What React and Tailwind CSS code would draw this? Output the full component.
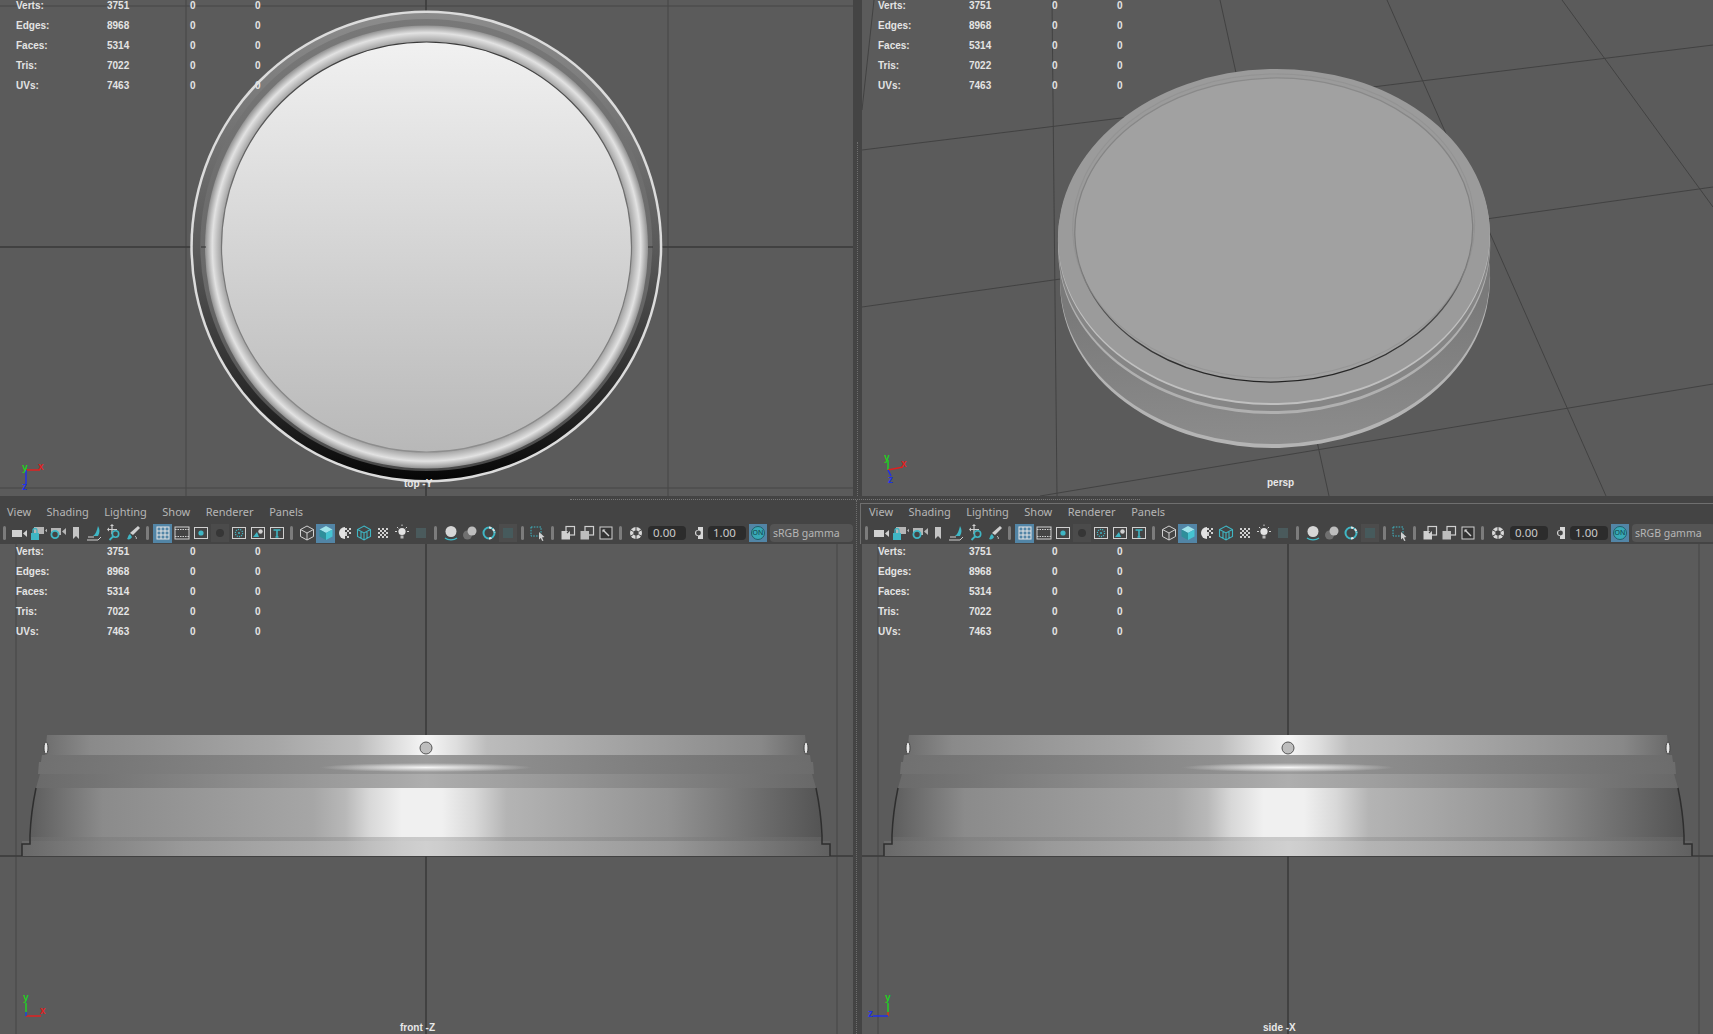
import React from "react";

const teal = "#3fb6c4";
const light = "#d0d0d0";

const menuItems = ["View", "Shading", "Lighting", "Show", "Renderer", "Panels"];
const stats = [
  ["Verts:", "3751"],
  ["Edges:", "8968"],
  ["Faces:", "5314"],
  ["Tris:", "7022"],
  ["UVs:", "7463"],
];

// Small toolbar glyphs, all drawn in an 18x18 box
const Glyph = ({ children }) => (
  <svg width="18" height="18" viewBox="0 0 18 18" className="block">
    {children}
  </svg>
);

const Checker = ({ x0, y0, n }) => {
  const cells = [];
  for (let i = 0; i < n; i++) {
    for (let j = 0; j < n; j++) {
      if ((i + j) % 2 === 0) {
        cells.push(<rect key={`${i}-${j}`} x={x0 + i * 2} y={y0 + j * 2} width="2" height="2" fill={light} />);
      }
    }
  }
  return <>{cells}</>;
};

const Camera = ({ x = 2, y = 6, c = light }) => (
  <>
    <rect x={x} y={y} width="10" height="7" fill={c} />
    <polygon points={`${x + 11},${y + 3.5} ${x + 15},${y} ${x + 15},${y + 7}`} fill={c} />
  </>
);

const icons = {
  camera: <Camera />,
  camLock: (
    <>
      <Camera x={5} y={3} c="#b5b5b5" />
      <rect x="2" y="9" width="8" height="7" fill={teal} />
      <path d="M4 9V6.5a2 2 0 0 1 4 0V9" fill="none" stroke={teal} strokeWidth="1.3" />
    </>
  ),
  camLink: (
    <>
      <Camera x={3} y={4} c="#b5b5b5" />
      <circle cx="7" cy="10.5" r="3.6" fill="#444" stroke={teal} strokeWidth="1.8" />
    </>
  ),
  bookmark: <path d="M6 3h6v12l-3-3-3 3z" fill="#c4c4c4" />,
  plane: (
    <>
      <path d="M7 12c3-2 4-6 5-10 2 3 2 7 0 10z" fill={teal} />
      <path d="M2 13h6M1 16h11l3-3" fill="none" stroke={light} strokeWidth="1" />
    </>
  ),
  gizmo: (
    <>
      <path d="M7 1v9M3 5.5h9" stroke={light} strokeWidth="1.2" />
      <path d="M7 0l-2 2h4zM2 5.5l2-2v4z" fill={light} />
      <circle cx="10.5" cy="10" r="3.2" fill="none" stroke={teal} strokeWidth="1.6" />
      <path d="M8 12.5l-3.5 3.5" stroke={teal} strokeWidth="1.8" />
    </>
  ),
  brush: (
    <>
      <path d="M14 2l2 2-7 7-3-2z" fill={light} />
      <path d="M6 10l2 3c-1 2-3 3-5 2 1-1 1-4 3-5z" fill={teal} />
      <path d="M11 12c1 1 2 2 1 3" fill="none" stroke={light} />
    </>
  ),
  grid: (
    <>
      <rect x="3" y="3" width="12" height="12" fill="none" stroke="#e6e6e6" />
      <path d="M7 3v12M11 3v12M3 7h12M3 11h12" stroke="#e6e6e6" />
    </>
  ),
  film: (
    <>
      <rect x="2" y="3" width="14" height="12" fill="none" stroke={light} />
      <path d="M2 5.5h14M2 12.5h14" stroke={light} strokeDasharray="1.5 1" />
    </>
  ),
  dot: (
    <>
      <rect x="2.5" y="3.5" width="13" height="11" fill="none" stroke={light} />
      <circle cx="9" cy="9" r="2.6" fill={teal} />
    </>
  ),
  darkDot: (
    <>
      <rect x="0" y="0" width="18" height="18" fill="#4b4b4b" />
      <circle cx="9" cy="9" r="4" fill="#363636" />
    </>
  ),
  target: (
    <>
      <rect x="2.5" y="3.5" width="13" height="11" fill="none" stroke={light} />
      <circle cx="9" cy="9" r="3.6" fill="none" stroke={teal} strokeWidth="1.2" strokeDasharray="1.2 1" />
      <circle cx="9" cy="9" r="1" fill={teal} />
    </>
  ),
  shapes: (
    <>
      <rect x="2.5" y="3.5" width="13" height="11" fill="none" stroke={light} />
      <polygon points="4,13 8,8 10,13" fill={teal} />
      <circle cx="11.5" cy="7.5" r="2.2" fill={light} />
    </>
  ),
  textBox: (
    <>
      <rect x="2.5" y="3.5" width="13" height="11" fill="none" stroke={light} />
      <path d="M5.5 6h7M9 6v7M7.5 13h3" stroke={teal} strokeWidth="1.6" fill="none" />
    </>
  ),
  wireCube: <path d="M9 2l6.5 3.5v7L9 16l-6.5-3.5v-7zM2.5 5.5L9 9l6.5-3.5M9 9v7" fill="none" stroke={light} />,
  solidCube: (
    <>
      <path d="M9 2l6.5 3.5L9 9 2.5 5.5z" fill="#9fe3ea" />
      <path d="M2.5 5.5L9 9v7l-6.5-3.5z" fill="#2f8f9b" />
      <path d="M15.5 5.5L9 9v7l6.5-3.5z" fill="#45c3d0" />
    </>
  ),
  halfCheck: (
    <>
      <path d="M9 3a6 6 0 0 0 0 12z" fill="#e2e2e2" />
      <Checker x0={9} y0={4} n={3} />
      <rect x="9" y="10" width="2" height="2" fill={light} />
      <rect x="11" y="12" width="2" height="2" fill={light} />
    </>
  ),
  tealCube: (
    <path d="M9 2l6.5 3.5v7L9 16l-6.5-3.5v-7zM2.5 5.5L9 9l6.5-3.5M9 9v7M6 7v7M12 7v7" fill="none" stroke={teal} strokeWidth="1.1" />
  ),
  checker: <Checker x0={4} y0={4} n={5} />,
  bulb: (
    <>
      <circle cx="9" cy="7.5" r="3.6" fill="#e4e4e4" />
      <rect x="7.5" y="11.5" width="3" height="3" fill="#b8b8b8" />
      <path d="M9 0.5v1.5M2 7.5h2M14 7.5h2M4 3l1.3 1.3M14 3l-1.3 1.3" stroke={light} />
    </>
  ),
  dim: <rect x="4" y="4" width="10" height="10" fill="#4a5a5c" />,
  dimWide: (
    <>
      <rect x="0" y="0" width="18" height="18" fill="#4c4c4c" />
      <rect x="4" y="4" width="10" height="10" fill="#465a5c" />
    </>
  ),
  sphere: (
    <>
      <circle cx="9" cy="7.5" r="5.5" fill="#d6d6d6" />
      <path d="M3 14c3 2.5 9 2.5 12 0" fill="none" stroke={teal} strokeWidth="1.3" />
    </>
  ),
  spheres: (
    <>
      <circle cx="6.5" cy="11" r="4.5" fill="#707070" />
      <circle cx="11" cy="7" r="4.5" fill="#bdbdbd" />
    </>
  ),
  ring: (
    <>
      <circle cx="9" cy="9" r="5.5" fill="none" stroke={teal} strokeWidth="2" />
      <path d="M9 3.5a5.5 5.5 0 0 1 5.5 5.5M9 14.5a5.5 5.5 0 0 0 2.8-.8" fill="none" stroke="#e4e4e4" strokeWidth="2" strokeDasharray="2.5 1.5" />
    </>
  ),
  select: (
    <>
      <rect x="2" y="3" width="10" height="9" fill="none" stroke={teal} strokeDasharray="1.6 1.2" />
      <path d="M10 8l5.5 5-2.5.4 1.5 3-1.3.6-1.5-3-1.7 1.6z" fill={light} />
    </>
  ),
  overlapA: (
    <>
      <rect x="7" y="2.5" width="8.5" height="8.5" fill="none" stroke={light} strokeWidth="1.2" />
      <rect x="2.5" y="7" width="8.5" height="8.5" fill={light} />
      <path d="M8 9l3-3" stroke="#444" strokeWidth="1.2" />
    </>
  ),
  overlapB: (
    <>
      <rect x="7" y="2.5" width="8.5" height="8.5" fill="none" stroke={light} strokeWidth="1.2" />
      <rect x="2.5" y="7" width="8.5" height="8.5" fill="#bdbdbd" />
    </>
  ),
  expand: (
    <>
      <rect x="3" y="3" width="12" height="12" fill="#333" stroke={light} />
      <path d="M6 6l6 6" stroke={light} strokeWidth="1.4" />
      <path d="M5.5 5.5h3l-3 3z" fill={light} />
    </>
  ),
  aperture: (
    <>
      <circle cx="9" cy="9" r="6" fill="#d8d8d8" />
      <path d="M9 6l2.6 1.5v3L9 12l-2.6-1.5v-3z" fill="#444" />
      <path d="M9 3v3M14.2 6l-2.6 1.5M14.2 12l-2.6-1.5M9 15v-3M3.8 12l2.6-1.5M3.8 6l2.6 1.5" stroke="#444" />
    </>
  ),
  gamma: (
    <>
      <path d="M9 3h5v12H9z" fill="#d8d8d8" />
      <path d="M9 6a3 3 0 0 0 0 6z" fill="#d8d8d8" />
      <circle cx="9.5" cy="9" r="2.4" fill="#444" />
    </>
  ),
};

const Icon = ({ name, active }) => (
  <div className={`w-[19px] h-[19px] flex items-center justify-center shrink-0 ${active ? "bg-[#5285a6]" : ""}`}>
    <Glyph>{icons[name]}</Glyph>
  </div>
);

const Sep = ({ first }) => (
  <div className={`h-[14px] flex items-center justify-center shrink-0 ${first ? "w-[9px]" : "w-[11px]"}`}>
    <div className="w-[3px] h-[14px] bg-[#7c7c7c] rounded-sm" />
  </div>
);

const Group = ({ names, activeName }) => (
  <>
    {names.map((n) => (
      <Icon key={n} name={n} active={n === activeName} />
    ))}
  </>
);

const Field = ({ value }) => (
  <div className="w-[38px] h-[14px] bg-[#2c2c2c] rounded-sm pl-[5px] text-[11.5px] leading-[14px] text-[#c9c9c9] shrink-0">
    {value}
  </div>
);

const PaneHeader = () => (
  <div className="font-['Noto_Sans',sans-serif]">
    <div className="flex gap-[15.5px] pl-[7px] h-[18px] pt-[1px] items-center text-[11px] text-[#b6b6b6]">
      {menuItems.map((m) => (
        <span key={m}>{m}</span>
      ))}
    </div>
    <div className="flex items-center h-[22px] mt-[1px] whitespace-nowrap">
      <Sep first />
      <Group names={["camera", "camLock", "camLink", "bookmark", "plane", "gizmo", "brush"]} />
      <Sep />
      <Group names={["grid", "film", "dot", "darkDot", "target", "shapes", "textBox"]} activeName="grid" />
      <Sep />
      <Group names={["wireCube", "solidCube", "halfCheck", "tealCube", "checker", "bulb", "dim"]} activeName="solidCube" />
      <Sep />
      <Group names={["sphere", "spheres", "ring", "dimWide"]} />
      <Sep />
      <Icon name="select" />
      <Sep />
      <Group names={["overlapA", "overlapB", "expand"]} />
      <Sep />
      <Icon name="aperture" />
      <div className="ml-[3px]">
        <Field value="0.00" />
      </div>
      <div className="ml-[2px]">
        <Icon name="gamma" />
      </div>
      <div className="ml-[1px]">
        <Field value="1.00" />
      </div>
      <div className="ml-[3px] w-[18px] h-[18px] bg-[#5285a6] flex items-center justify-center shrink-0">
        <div className="w-[14px] h-[14px] rounded-full bg-[#38a9b6] border border-[#1f5f68] text-[7px] leading-[12px] text-center text-[#12393f]">
          ON
        </div>
      </div>
      <div className="ml-[3px] w-[83px] h-[18px] bg-[#545454] rounded-sm pl-[3px] text-[10.5px] leading-[18px] text-[#b6b6b6] shrink-0">
        sRGB gamma
      </div>
    </div>
  </div>
);

const Stats = ({ top }) => (
  <div className={`absolute left-[16px] grid grid-cols-[91px_83px_65px_20px] auto-rows-[20px] items-center font-['Liberation_Sans',sans-serif] font-bold text-[10px] text-[#e4e4e4] ${top}`}>
    {stats.map(([label, value]) => (
      <React.Fragment key={label}>
        <span>{label}</span>
        <span>{value}</span>
        <span>0</span>
        <span>0</span>
      </React.Fragment>
    ))}
  </div>
);

const Axes = ({ variant }) => {
  const sets = {
    front: { o: [26, 472], y: [26, 459], x: [41, 472], z: [26, 468], lx: [40, 470], ly: [23, 457], lz: null },
    top: { o: [26, 470], y: [26, 468], x: [40, 470], z: [26, 484], lx: [38, 470], ly: [22, 471], lz: [22, 490] },
    persp: { o: [26, 470], y: [26, 460], x: [41, 467], z: [29, 476], lx: [39, 467], ly: [22, 461], lz: [26, 483] },
    side: { o: [26, 472], y: [26, 459], x: [26, 468], z: [11, 472], lx: null, ly: [23, 457], lz: [6, 473] },
  };
  const s = sets[variant];
  return (
    <g fontFamily="Liberation Sans, sans-serif" fontWeight="bold" fontSize="10">
      <line x1={s.o[0]} y1={s.o[1]} x2={s.y[0]} y2={s.y[1]} stroke="#22d022" strokeWidth="1.5" />
      <line x1={s.o[0]} y1={s.o[1]} x2={s.x[0]} y2={s.x[1]} stroke="#e02020" strokeWidth="1.5" />
      <line x1={s.o[0]} y1={s.o[1]} x2={s.z[0]} y2={s.z[1]} stroke="#2030e8" strokeWidth="1.5" />
      <text x={s.ly[0]} y={s.ly[1]} fill="#22d022">y</text>
      {s.lx && <text x={s.lx[0]} y={s.lx[1]} fill="#e02020">x</text>}
      {s.lz && <text x={s.lz[0]} y={s.lz[1]} fill="#2030e8">z</text>}
    </g>
  );
};

const TopDrawing = () => (
  <svg viewBox="0 0 853 496" className="absolute inset-0 w-full h-full">
    <defs>
      <linearGradient id="discFill" x1="0" y1="0" x2="0" y2="1">
        <stop offset="0" stopColor="#f1f1f1" />
        <stop offset="1" stopColor="#b8b8b8" />
      </linearGradient>
      <linearGradient id="outerDark" x1="0" y1="0" x2="0" y2="1">
        <stop offset="0" stopColor="#8c8c8c" />
        <stop offset="0.5" stopColor="#5a5a5a" />
        <stop offset="0.85" stopColor="#252525" />
        <stop offset="1" stopColor="#060606" />
      </linearGradient>
      <linearGradient id="midBand" x1="0" y1="0" x2="0" y2="1">
        <stop offset="0" stopColor="#787878" />
        <stop offset="0.6" stopColor="#686868" />
        <stop offset="1" stopColor="#484848" />
      </linearGradient>
      <radialGradient id="rimLight" gradientUnits="userSpaceOnUse" cx="426.5" cy="247" r="222">
        <stop offset="0.92" stopColor="#9c9c9c" />
        <stop offset="0.965" stopColor="#e2e2e2" />
        <stop offset="1" stopColor="#8c8c8c" />
      </radialGradient>
      <linearGradient id="discEdge" x1="0" y1="0" x2="0" y2="1">
        <stop offset="0" stopColor="#3a3a3a" />
        <stop offset="0.35" stopColor="#6e6e6e" />
        <stop offset="1" stopColor="#8e8e8e" />
      </linearGradient>
    </defs>
    <path d="M186 0V496M668 0V496M0 6H853M0 488H853" stroke="#464646" strokeWidth="1" />
    <path d="M426 0V496M0 247H853" stroke="#3a3a3a" strokeWidth="1.5" />
    <circle cx="426.3" cy="246.5" r="236" fill="#dcdcdc" />
    <circle cx="426.3" cy="246.5" r="233.5" fill="url(#outerDark)" />
    <circle cx="426.3" cy="245" r="226" fill="url(#midBand)" />
    <circle cx="426.5" cy="247" r="221.5" fill="url(#rimLight)" />
    <circle cx="426.5" cy="247" r="205" fill="url(#discFill)" stroke="url(#discEdge)" strokeWidth="1.2" />
    <path d="M201 247h5M648 247h5" stroke="#333" />
    <Axes variant="top" />
  </svg>
);

const PerspDrawing = () => (
  <svg viewBox="0 0 851 496" className="absolute inset-0 w-full h-full">
    <defs>
      <linearGradient id="lidRing" x1="0" y1="0" x2="0" y2="1">
        <stop offset="0" stopColor="#8a8a8a" />
        <stop offset="0.6" stopColor="#7e7e7e" />
        <stop offset="0.8" stopColor="#484848" />
        <stop offset="1" stopColor="#222" />
      </linearGradient>
      <linearGradient id="wall" x1="0" y1="0" x2="0" y2="1">
        <stop offset="0.6" stopColor="#7a7a7a" />
        <stop offset="1" stopColor="#8c8c8c" />
      </linearGradient>
    </defs>
    <path
      d="M0 150L851 45M0 307L851 187M178 496L851 384M190 0L195 496M358 0L467 496M525 0L744 496M700 0L851 207M12 0L0 110"
      stroke="#424242"
      strokeWidth="1"
      fill="none"
    />
    <g transform="rotate(-1.5 412 240)">
      <ellipse cx="412" cy="281" rx="215" ry="167" fill="#b4b4b4" />
      <ellipse cx="412" cy="278" rx="215" ry="166" fill="url(#wall)" />
      <ellipse cx="412" cy="248" rx="216" ry="166" fill="#b0b0b0" />
      <ellipse cx="412" cy="245" rx="216" ry="166" fill="#868686" />
      <ellipse cx="412" cy="238" rx="216" ry="167" fill="#c0c0c0" />
      <ellipse cx="412" cy="236" rx="216" ry="167" fill="#9b9b9b" />
      <ellipse cx="412" cy="230" rx="199" ry="152" fill="#a1a1a1" stroke="url(#lidRing)" strokeWidth="1.3" />
      <ellipse cx="412" cy="226" rx="201" ry="152" fill="none" stroke="#8b8b8b" strokeWidth="1" opacity="0.5" />
    </g>
    <Axes variant="persp" />
  </svg>
);

const SideDrawing = ({ variant, width }) => (
  <svg viewBox={`0 0 ${width} 490`} className="absolute inset-0 w-full h-full">
    <defs>
      <linearGradient id="capGrad" x1="0" y1="0" x2="1" y2="0">
        <stop offset="0" stopColor="#6e6e6e" />
        <stop offset="0.06" stopColor="#8a8a8a" />
        <stop offset="0.3" stopColor="#a6a6a6" />
        <stop offset="0.41" stopColor="#bcbcbc" />
        <stop offset="0.46" stopColor="#dedede" />
        <stop offset="0.5" stopColor="#f6f6f6" />
        <stop offset="0.54" stopColor="#dedede" />
        <stop offset="0.58" stopColor="#bcbcbc" />
        <stop offset="0.72" stopColor="#a8a8a8" />
        <stop offset="0.94" stopColor="#888888" />
        <stop offset="1" stopColor="#6a6a6a" />
      </linearGradient>
      <linearGradient id="grooveGrad" x1="0" y1="0" x2="1" y2="0">
        <stop offset="0" stopColor="#707070" />
        <stop offset="0.4" stopColor="#8e8e8e" />
        <stop offset="0.5" stopColor="#9c9c9c" />
        <stop offset="0.6" stopColor="#8e8e8e" />
        <stop offset="1" stopColor="#6c6c6c" />
      </linearGradient>
      <linearGradient id="wallGrad" x1="0" y1="0" x2="1" y2="0">
        <stop offset="0" stopColor="#585858" />
        <stop offset="0.1" stopColor="#8b8b8b" />
        <stop offset="0.36" stopColor="#a6a6a6" />
        <stop offset="0.4" stopColor="#b8b8b8" />
        <stop offset="0.43" stopColor="#d8d8d8" />
        <stop offset="0.47" stopColor="#f0f0f0" />
        <stop offset="0.52" stopColor="#f0f0f0" />
        <stop offset="0.56" stopColor="#d8d8d8" />
        <stop offset="0.6" stopColor="#b4b4b4" />
        <stop offset="0.8" stopColor="#929292" />
        <stop offset="1" stopColor="#505050" />
      </linearGradient>
      <linearGradient id="neckGrad" x1="0" y1="0" x2="1" y2="0">
        <stop offset="0" stopColor="#6a6a6a" />
        <stop offset="0.4" stopColor="#9e9e9e" />
        <stop offset="0.5" stopColor="#aeaeae" />
        <stop offset="0.6" stopColor="#a0a0a0" />
        <stop offset="1" stopColor="#686868" />
      </linearGradient>
      <linearGradient id="baseGrad" x1="0" y1="0" x2="1" y2="0">
        <stop offset="0" stopColor="#6c6c6c" />
        <stop offset="0.2" stopColor="#9a9a9a" />
        <stop offset="0.4" stopColor="#b2b2b2" />
        <stop offset="0.5" stopColor="#c8c8c8" />
        <stop offset="0.6" stopColor="#b4b4b4" />
        <stop offset="0.8" stopColor="#9a9a9a" />
        <stop offset="1" stopColor="#646464" />
      </linearGradient>
      <radialGradient id="shine">
        <stop offset="0" stopColor="#f6f6f6" />
        <stop offset="1" stopColor="#f6f6f6" stopOpacity="0" />
      </radialGradient>
    </defs>
    <path d="M16 0V490M837 0V490" stroke="#464646" strokeWidth="1" />
    <path d="M426 0V490M0 312H853" stroke="#3a3a3a" strokeWidth="1.5" />
    {/* lid seen side on */}
    <polygon points="47,191 805,191 807,211 45,211" fill="url(#capGrad)" />
    <polygon points="42,211 810,211 811,218 41,218" fill="url(#grooveGrad)" />
    <polygon points="39,218 813,218 814,230 38,230" fill="url(#grooveGrad)" />
    <rect x="320" y="219" width="212" height="9" fill="url(#shine)" />
    <polygon points="40,230 812,230 816,244 36,244" fill="url(#neckGrad)" />
    <path d="M36 244H816Q821 268 822 291V300H830V312H22V300H30V291Q31 268 36 244Z" fill="url(#wallGrad)" />
    <rect x="30" y="293" width="792" height="4" fill="url(#grooveGrad)" opacity="0.45" />
    <rect x="22" y="297" width="808" height="15" fill="url(#baseGrad)" opacity="0.8" />
    <path d="M36 244Q31 268 30 291V300H22V312M816 244Q821 268 822 291V300H830V312" fill="none" stroke="#2e2e2e" strokeWidth="1.5" />
    <circle cx="426" cy="204" r="6" fill="#bdbdbd" stroke="#555" />
    <ellipse cx="46" cy="204" rx="2" ry="6" fill="#e8e8e8" stroke="#444" />
    <ellipse cx="806" cy="204" rx="2" ry="6" fill="#e8e8e8" stroke="#444" />
    <Axes variant={variant} />
  </svg>
);

const Viewport = ({ drawing, statsTop, label, labelClass }) => (
  <div className="relative flex-1 bg-[#5b5b5b] overflow-hidden">
    {drawing}
    <Stats top={statsTop} />
    <span className={`absolute font-['Liberation_Sans',sans-serif] font-bold text-[10px] leading-[10px] text-[#e8e8e8] ${labelClass}`}>
      {label}
    </span>
  </div>
);

export default function App() {
  return (
    <div className="w-[1713px] h-[1034px] bg-[#444444] flex flex-col overflow-hidden">
      <div className="flex h-[496px] shrink-0">
        <div className="w-[853px] flex">
          <Viewport
            drawing={<TopDrawing />}
            statsTop="-top-[5px]"
            label="top -Y"
            labelClass="left-[404px] top-[479px]"
          />
        </div>
        <div className="w-[9px] relative">
          <div className="absolute left-[4px] top-[142px] bottom-0 border-l border-dotted border-[#6e6e6e]" />
        </div>
        <div className="flex-1 flex">
          <Viewport
            drawing={<PerspDrawing />}
            statsTop="-top-[5px]"
            label="persp"
            labelClass="left-[405px] top-[478px]"
          />
        </div>
      </div>

      <div className="h-[4px] shrink-0 relative">
        <div className="absolute left-[570px] w-[570px] top-[3px] border-t border-dotted border-[#767676]" />
      </div>

      <div className="flex flex-1">
        <div className="w-[853px] flex flex-col">
          <div className="h-[44px] pt-[3px] shrink-0">
            <PaneHeader />
          </div>
          <Viewport
            drawing={<SideDrawing variant="front" width={853} />}
            statsTop="-top-[3px]"
            label="front -Z"
            labelClass="left-[400px] top-[479px]"
          />
        </div>
        <div className="w-[7px] relative">
          <div className="absolute left-[3px] top-0 bottom-0 border-l border-dotted border-[#6e6e6e]" />
        </div>
        <div className="flex-1 min-w-0 flex flex-col">
          <div className="h-[44px] shrink-0 pt-[3px] overflow-hidden">
            <div className="border-t border-l border-[#6f6f6f] pl-[1px] h-[41px] w-[900px]">
              <div className="-mt-[1px]">
                <PaneHeader />
              </div>
            </div>
          </div>
          <div className="flex-1 flex pl-[2px]">
            <Viewport
              drawing={<SideDrawing variant="side" width={851} />}
              statsTop="-top-[3px]"
              label="side -X"
              labelClass="left-[401px] top-[479px]"
            />
          </div>
        </div>
      </div>
    </div>
  );
}
